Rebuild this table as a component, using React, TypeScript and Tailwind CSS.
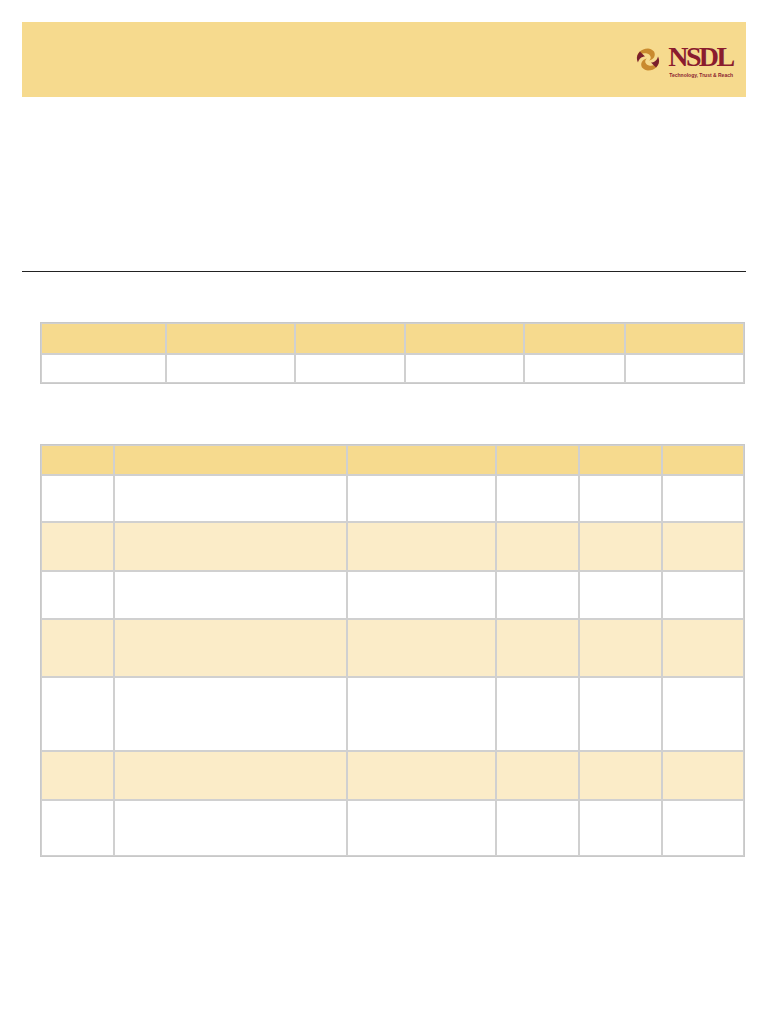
import React from "react";

const HEAD = "bg-[#f6da8e]";
const STRIPE = "bg-[#fbecc8]";

function Logo() {
  return (
    <div className="flex items-center gap-[6px]">
      <svg width="28" height="27" viewBox="0 0 28 26" className="mt-[-3px]">
        <path d="M14 2 C7 2 2 7 3 13 C4 9 8 6 13 7 C17 8 18 12 15 14 C20 13 22 9 20 5 C18 3 16 2 14 2 Z" fill="#c98a2e" />
        <path d="M14 24 C21 24 26 19 25 13 C24 17 20 20 15 19 C11 18 10 14 13 12 C8 13 6 17 8 21 C10 23 12 24 14 24 Z" fill="#c98a2e" />
        <path d="M6 5 C3 8 2 12 4 16 C5 12 8 10 11 10 C9 8 7 6 6 5 Z" fill="#7a1f2c" />
        <path d="M22 21 C25 18 26 14 24 10 C23 14 20 16 17 16 C19 18 21 20 22 21 Z" fill="#7a1f2c" />
      </svg>
      <div className="flex flex-col items-start">
        <span
          className="text-[28px] leading-[26px] font-bold tracking-[-2.6px] text-[#8a1c2e]"
          style={{ fontFamily: '"Liberation Serif", "DejaVu Serif", serif' }}
        >
          NSDL
        </span>
        <span
          className="text-[5px] leading-[6px] font-bold text-[#8a1c2e] mt-[2px] ml-[1px] whitespace-nowrap"
          style={{ fontFamily: '"Liberation Sans", Arial, sans-serif' }}
        >
          Technology, Trust &amp; Reach
        </span>
      </div>
    </div>
  );
}

const t1Cols = "grid-cols-[123px_127px_108px_117px_99px_117px]";
const t2Cols = "grid-cols-[71px_231px_147px_81px_81px_80px]";

const t2Rows: { h: string; bg: string }[] = [
  { h: "h-[45px]", bg: "bg-white" },
  { h: "h-[47px]", bg: STRIPE },
  { h: "h-[46px]", bg: "bg-white" },
  { h: "h-[56px]", bg: STRIPE },
  { h: "h-[72px]", bg: "bg-white" },
  { h: "h-[47px]", bg: STRIPE },
  { h: "h-[54px]", bg: "bg-white" },
];

export default function App() {
  const six = [0, 1, 2, 3, 4, 5];
  return (
    <div
      className="w-[768px] h-[1024px] bg-white px-[22px] pt-[22px]"
      style={{ fontFamily: '"Liberation Sans", Arial, sans-serif' }}
    >
      <div className={`${HEAD} h-[75px] flex items-center justify-end pr-[13px] pt-[2px]`}>
        <Logo />
      </div>

      <div className="mt-[174px] h-[1px] bg-[#222222]" />

      <div className="pl-[18px] pr-[1px] mt-[50px]">
        <div className={`grid ${t1Cols} gap-[2px] p-[1px] border border-[#c8c8c8] bg-[#d0d0d0]`}>
          {six.map((i) => (
            <div key={"h" + i} className={`${HEAD} h-[29px]`} />
          ))}
          {six.map((i) => (
            <div key={"b" + i} className="bg-white h-[27px]" />
          ))}
        </div>
      </div>

      <div className="pl-[18px] pr-[1px] mt-[60px]">
        <div className={`grid ${t2Cols} gap-[2px] p-[1px] border border-[#c8c8c8] bg-[#d0d0d0]`}>
          {six.map((i) => (
            <div key={"h" + i} className={`${HEAD} h-[28px]`} />
          ))}
          {t2Rows.map((r, ri) =>
            six.map((i) => <div key={ri + "-" + i} className={`${r.bg} ${r.h}`} />)
          )}
        </div>
      </div>
    </div>
  );
}
